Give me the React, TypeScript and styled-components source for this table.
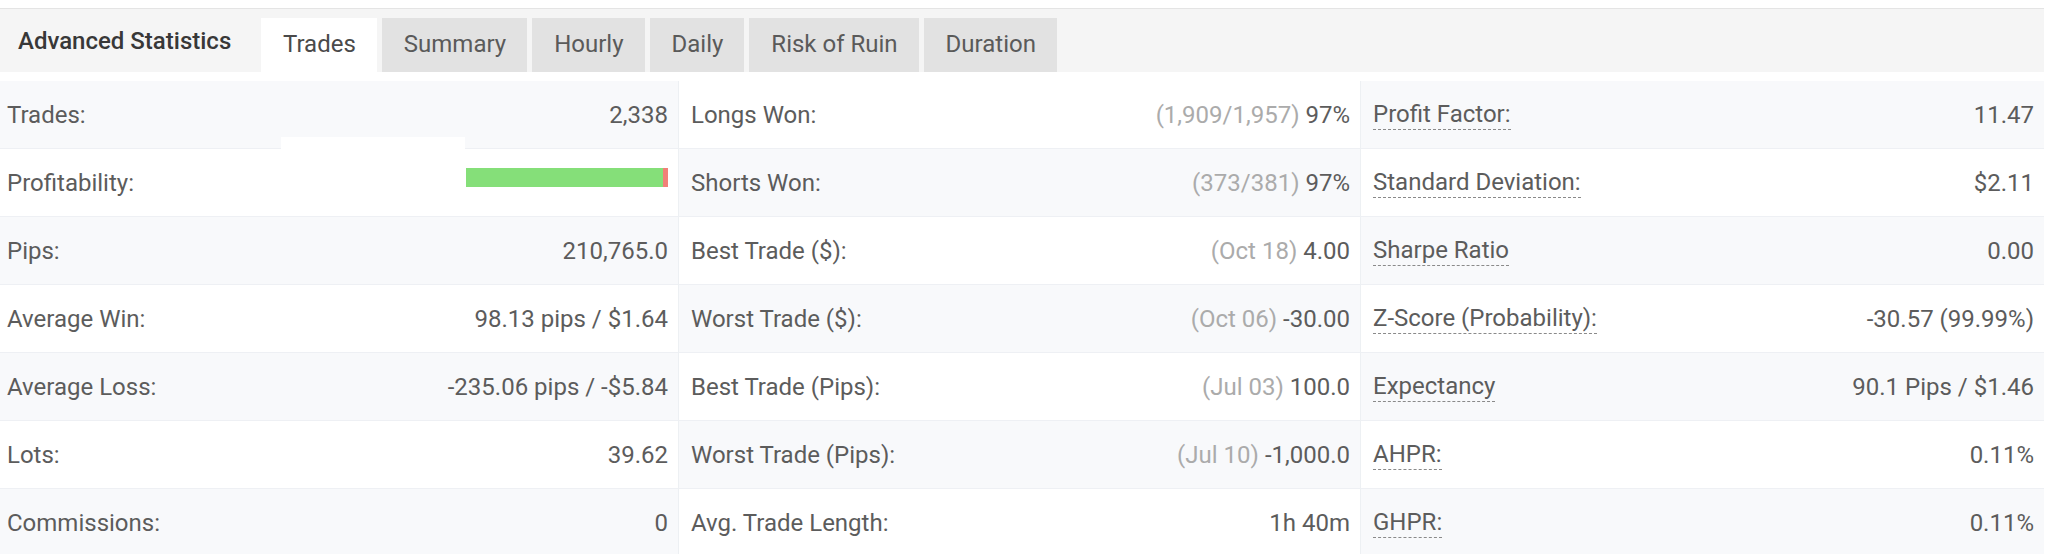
import React from "react";
import styled, { createGlobalStyle } from "styled-components";

const GlobalStyle = createGlobalStyle`
  html, body { margin: 0; padding: 0; background: #ffffff; }
  body { font-family: Roboto, "Liberation Sans", Arial, sans-serif; }
`;

const Panel = styled.div`
  width: 2044px;
  margin-top: 8px;
  border-top: 1px solid #e4e4e4;
`;

const TabBar = styled.div`
  display: flex;
  align-items: flex-end;
  height: 63px;
  background: #f5f5f5;
`;

const Title = styled.div`
  align-self: stretch;
  display: flex;
  align-items: center;
  box-sizing: border-box;
  width: 256px;
  padding-left: 18px;
  font-size: 24px;
  font-weight: 500;
  color: #383838;
`;

const Tab = styled.div<{ $active?: boolean }>`
  display: flex;
  align-items: center;
  justify-content: center;
  box-sizing: border-box;
  height: 54px;
  padding: 0 21px 3px 22px;
  margin-left: 5px;
  font-size: 24px;
  color: ${(p) => (p.$active ? "#4a4a4a" : "#5a5a5a")};
  background: ${(p) => (p.$active ? "#ffffff" : "#e2e2e2")};
`;

const Grid = styled.div`
  display: grid;
  grid-template-columns: 678px 682px 684px;
  margin-top: 9px;
`;

const Column = styled.div<{ $first?: boolean }>`
  display: flex;
  flex-direction: column;
  border-left: ${(p) => (p.$first ? "none" : "1px solid #edf0f3")};
`;

const Row = styled.div<{ $striped: boolean; $first?: boolean }>`
  position: relative;
  display: flex;
  align-items: center;
  justify-content: space-between;
  box-sizing: border-box;
  height: 68px;
  padding: 0 10px 0 ${(p) => (p.$first ? "7px" : "12px")};
  border-bottom: 1px solid #eef0f4;
  background: ${(p) => (p.$striped ? "#f8f9fb" : "#ffffff")};
  font-size: 24px;
  color: #5c5c5c;
`;

const Label = styled.span<{ $hint?: boolean }>`
  color: #5c5c5c;
  ${(p) =>
    p.$hint
      ? `border-bottom: 1px dashed #8a8a8a; padding-bottom: 1px;`
      : ""}
`;

const Value = styled.span`
  color: #5c5c5c;
  white-space: nowrap;
`;

const Muted = styled.span`
  color: #ababab;
`;

const Mask = styled.span`
  position: absolute;
  left: 281px;
  top: -12px;
  width: 184px;
  height: 12px;
  background: #ffffff;
`;

const Bar = styled.div`
  display: flex;
  width: 202px;
  height: 19px;
  margin-bottom: 10px;
`;

const BarPart = styled.div<{ $color: string }>`
  height: 100%;
  background: ${(p) => p.$color};
`;

type Stat = { label: string; value: React.ReactNode; muted?: string; hint?: boolean };

const col1: Stat[] = [
  { label: "Trades:", value: "2,338" },
  { label: "Profitability:", value: "__bar__" },
  { label: "Pips:", value: "210,765.0" },
  { label: "Average Win:", value: "98.13 pips / $1.64" },
  { label: "Average Loss:", value: "-235.06 pips / -$5.84" },
  { label: "Lots:", value: "39.62" },
  { label: "Commissions:", value: "0" },
];

const col2: Stat[] = [
  { label: "Longs Won:", muted: "(1,909/1,957)", value: "97%" },
  { label: "Shorts Won:", muted: "(373/381)", value: "97%" },
  { label: "Best Trade ($):", muted: "(Oct 18)", value: "4.00" },
  { label: "Worst Trade ($):", muted: "(Oct 06)", value: "-30.00" },
  { label: "Best Trade (Pips):", muted: "(Jul 03)", value: "100.0" },
  { label: "Worst Trade (Pips):", muted: "(Jul 10)", value: "-1,000.0" },
  { label: "Avg. Trade Length:", value: "1h 40m" },
];

const col3: Stat[] = [
  { label: "Profit Factor:", value: "11.47", hint: true },
  { label: "Standard Deviation:", value: "$2.11", hint: true },
  { label: "Sharpe Ratio", value: "0.00", hint: true },
  { label: "Z-Score (Probability):", value: "-30.57 (99.99%)", hint: true },
  { label: "Expectancy", value: "90.1 Pips / $1.46", hint: true },
  { label: "AHPR:", value: "0.11%", hint: true },
  { label: "GHPR:", value: "0.11%", hint: true },
];

const won = 2282;
const total = 2338;

function renderValue(s: Stat) {
  if (s.value === "__bar__") {
    const pct = (won / total) * 100;
    return (
      <Bar>
        <BarPart $color="#85df79" style={{ width: `${pct}%` }} />
        <BarPart $color="#f08078" style={{ width: `${100 - pct}%` }} />
      </Bar>
    );
  }
  return (
    <Value>
      {s.muted ? <Muted>{s.muted} </Muted> : null}
      {s.value}
    </Value>
  );
}

function StatColumn({ items, stripeOdd, first }: { items: Stat[]; stripeOdd: boolean; first?: boolean }) {
  return (
    <Column $first={first}>
      {items.map((s, i) => (
        <Row key={s.label} $striped={stripeOdd ? i % 2 === 0 : i % 2 === 1} $first={first}>
          {s.value === "__bar__" ? <Mask /> : null}
          <Label $hint={s.hint}>{s.label}</Label>
          {renderValue(s)}
        </Row>
      ))}
    </Column>
  );
}

export default function App() {
  const tabs = ["Trades", "Summary", "Hourly", "Daily", "Risk of Ruin", "Duration"];
  return (
    <>
      <GlobalStyle />
      <Panel>
        <TabBar>
          <Title>Advanced Statistics</Title>
          {tabs.map((t, i) => (
            <Tab key={t} $active={i === 0}>
              {t}
            </Tab>
          ))}
        </TabBar>
        <Grid>
          <StatColumn items={col1} stripeOdd first />
          <StatColumn items={col2} stripeOdd={false} />
          <StatColumn items={col3} stripeOdd />
        </Grid>
      </Panel>
    </>
  );
}
